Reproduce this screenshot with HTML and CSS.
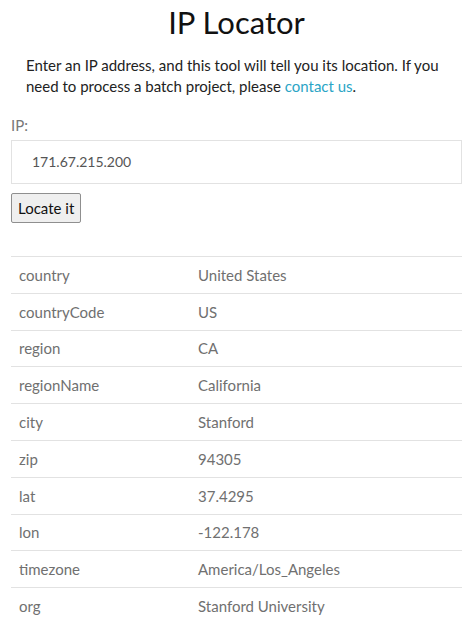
FILE: index.html
```html
<!DOCTYPE html>
<html>
<head>
<meta charset="utf-8">
<link rel="stylesheet" href="styles.css">
</head>
<body>
<div class="page">
  <h1 class="title">IP Locator</h1>
  <p class="intro">Enter an IP address, and this tool will tell you its location. If you need to process a batch project, please <a class="link" href="#">contact us</a>.</p>
  <label class="label">IP:</label>
  <div class="input">171.67.215.200</div>
  <button class="btn">Locate it</button>
  <table class="result">
    <tr><td>country</td><td>United States</td></tr>
    <tr><td>countryCode</td><td>US</td></tr>
    <tr><td>region</td><td>CA</td></tr>
    <tr><td>regionName</td><td>California</td></tr>
    <tr><td>city</td><td>Stanford</td></tr>
    <tr><td>zip</td><td>94305</td></tr>
    <tr><td>lat</td><td>37.4295</td></tr>
    <tr><td>lon</td><td>-122.178</td></tr>
    <tr><td>timezone</td><td>America/Los_Angeles</td></tr>
    <tr><td>org</td><td>Stanford University</td></tr>
  </table>
</div>
</body>
</html>
```
FILE: styles.css
```css
html, body { margin: 0; padding: 0; background: #fff; }
body { font-family: Lato, "Open Sans", sans-serif; color: #222; }
.page { padding: 0 12px 0 11px; }
.title {
  margin: 0;
  padding-top: 2px;
  text-align: center;
  font-weight: 400;
  font-size: 31px;
  line-height: 40px;
  color: #111;
}
.intro {
  margin: 13px 0 0 0;
  padding: 0 15px;
  font-size: 15px;
  line-height: 21px;
  color: #222;
}
.link { color: #2ba5c6; text-decoration: none; }
.label {
  display: block;
  margin-top: 18px;
  font-size: 15px;
  line-height: 20px;
  color: #777;
}
.input {
  margin-top: 5px;
  height: 42px;
  border: 1px solid #e2e2e2;
  padding: 0 20px;
  font-size: 14px;
  line-height: 42px;
  color: #555;
}
.btn {
  margin-top: 9px;
  display: block;
  font-family: Lato, sans-serif;
  font-size: 15px;
  color: #111;
  background: #efefef;
  border: 1px solid #8f8f8f;
  border-radius: 2px;
  padding: 0 6px;
  height: 30px;
}
.result {
  margin-top: 33px;
  width: 100%;
  border-collapse: collapse;
  font-size: 15px;
  color: #707070;
}
.result td {
  border-top: 1px solid #e2e2e2;
  height: 35.8px;
  padding: 0 8px;
  vertical-align: middle;
}
.result td:first-child { width: 163px; }
```
